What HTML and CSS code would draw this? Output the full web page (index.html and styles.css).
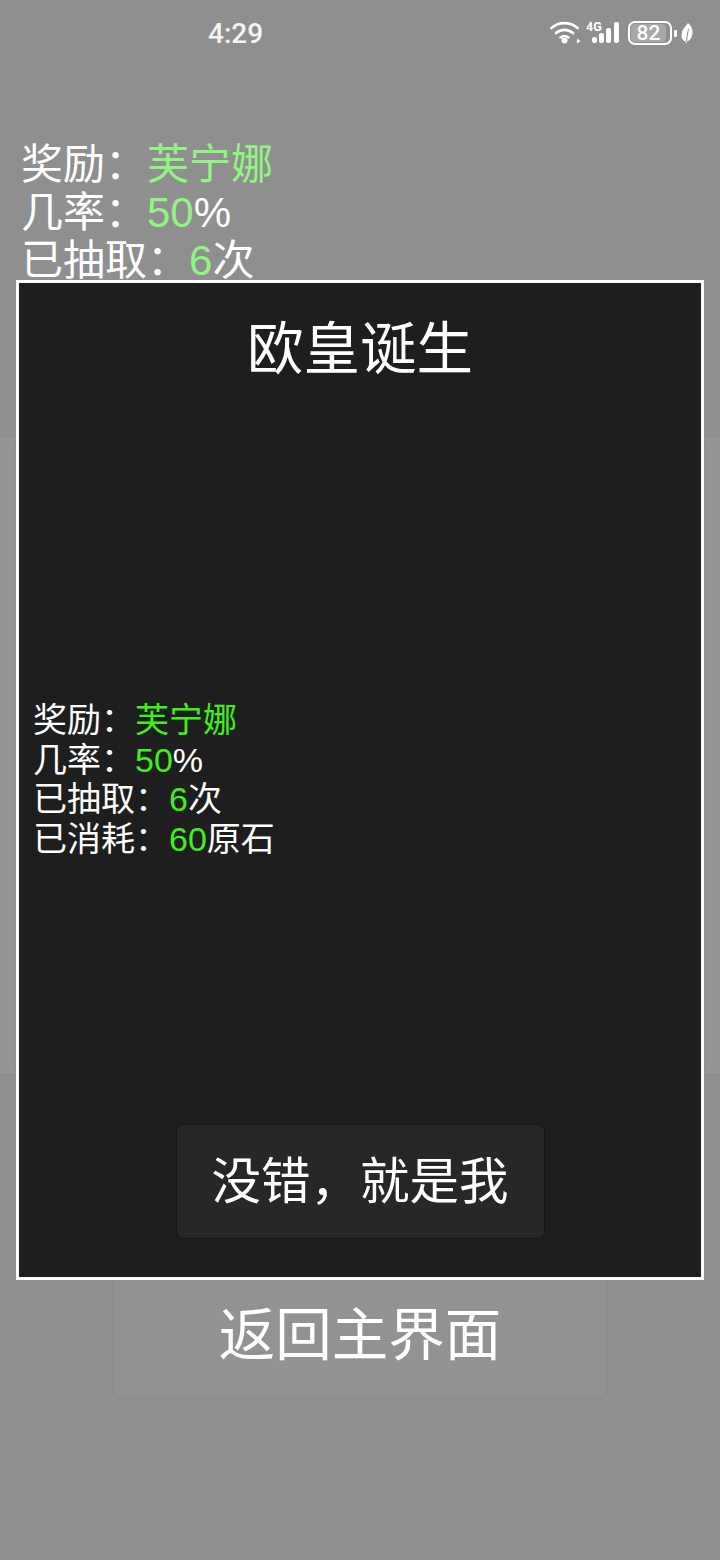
FILE: index.html
```html
<!DOCTYPE html>
<html lang="zh-CN">
<head>
    <meta charset="utf-8">
    <title>抽奖结果</title>
    <link rel="stylesheet" href="styles.css">
</head>
<body>
    <div class="screen">
        <div class="statusbar">
            <span class="statusbar__time">4:29</span>
            <div class="statusbar__icons">
                <svg class="wifi" width="31" height="26" viewBox="0 0 31 26">
                    <path d="M1.500 8a20 20 0 0 1 26 0" fill="none" stroke="#fff" stroke-width="2.800" stroke-linecap="round"/>
                    <path d="M6 13a13 13 0 0 1 17 0" fill="none" stroke="#fff" stroke-width="2.800" stroke-linecap="round"/>
                    <path d="M10.500 17.500a6.500 6.500 0 0 1 8 0" fill="none" stroke="#fff" stroke-width="2.500" stroke-linecap="round"/>
                    <circle cx="14.500" cy="20.500" r="3" fill="#fff"/>
                    <path d="M27 18.500l3.500 2.500-3.500 2.500z" fill="#fff"/>
                </svg>
                <div class="signal">
                    <span class="signal__label">4G</span>
                    <svg width="34" height="26" viewBox="0 0 34 26">
                        <rect x="6" y="17" width="5" height="6" rx="2" fill="#fff"/>
                        <rect x="13" y="13" width="5" height="10" rx="2" fill="#fff"/>
                        <rect x="20" y="8" width="5" height="15" rx="2" fill="#fff"/>
                        <rect x="28" y="2" width="5" height="21" rx="2" fill="#fff"/>
                    </svg>
                </div>
                <div class="battery">
                    <div class="battery__body"><span class="battery__level">82</span></div>
                    <span class="battery__cap"></span>
                </div>
                <svg class="leaf" width="12" height="20" viewBox="0 0 12 20">
                    <path d="M7 0C10.500 3 12 6.500 11.500 10.500 11 14.500 9 17.500 6 18.500L5.500 20 4.500 19.500 5 18.500C2 18 0 15.500 0.500 11.500 1 7 4 3.500 7 0z" fill="#fff"/>
                    <path d="M5.500 18.500C6 14 6.500 10 7.500 6" fill="none" stroke="#8e8e8e" stroke-width="1"/>
                </svg>
            </div>
        </div>

        <div class="summary">
            <div>奖励：<span class="summary__value">芙宁娜</span></div>
            <div>几率：<span class="summary__value">50</span>%</div>
            <div>已抽取：<span class="summary__value">6</span>次</div>
        </div>

        <div class="panel"><div class="panel__inner"></div></div>

        <div class="back-button">返回主界面</div>

        <div class="dialog">
            <div class="dialog__title">欧皇诞生</div>
            <div class="result">
                <div>奖励：<span class="result__value">芙宁娜</span></div>
                <div>几率：<span class="result__value">50</span>%</div>
                <div>已抽取：<span class="result__value">6</span>次</div>
                <div>已消耗：<span class="result__value">60</span>原石</div>
            </div>
            <div class="dialog__button">没错，就是我</div>
        </div>
    </div>
</body>
</html>
```

FILE: styles.css
```css
html,
body {
    margin: 0;
    padding: 0;
}
body {
    background: #8f8f8f;
    color: #fff;
    font-family: "Liberation Sans", "Noto Sans CJK SC", sans-serif;
}

.screen {
    height: 1560px;
    overflow: hidden;
    position: relative;
    width: 720px;
}

.statusbar {
    align-items: center;
    display: flex;
    height: 66px;
    justify-content: space-between;
    padding: 0 27px 0 208px;
}
.statusbar__time {
    color: #f4f4f4;
    font-family: Roboto, sans-serif;
    font-size: 28px;
    font-weight: 500;
}
.statusbar__icons {
    align-items: center;
    display: flex;
    gap: 7px;
}
.wifi {
    margin-right: -2px;
}
.signal {
    height: 26px;
    position: relative;
    width: 34px;
}
.signal__label {
    font-family: Roboto, sans-serif;
    font-size: 12.500px;
    font-weight: 700;
    left: 0;
    line-height: 12px;
    position: absolute;
    top: 1px;
}
.battery {
    align-items: center;
    display: flex;
    gap: 2px;
    margin-left: 1px;
}
.battery__body {
    border: 2px solid #fff;
    border-radius: 7px;
    box-sizing: border-box;
    display: flex;
    height: 24px;
    padding: 1px;
    width: 44px;
}
.battery__level {
    background: #a8a8a8;
    border-radius: 4px;
    font-family: Roboto, sans-serif;
    font-size: 21px;
    font-weight: 500;
    line-height: 18px;
    text-align: center;
    width: 35px;
}
.battery__cap {
    background: #fff;
    border-radius: 1px;
    height: 7px;
    width: 3px;
}
.leaf {
    margin-left: -3px;
}

.summary {
    font-size: 42px;
    line-height: 48px;
    margin-top: 75px;
    padding-left: 21px;
}
.summary__value {
    color: #92f482;
}

.panel {
    background: #949494;
    border-bottom: 1px solid #8b8b8b;
    box-sizing: border-box;
    height: 637px;
    margin-top: 153px;
}
.panel__inner {
    border: 1px solid #8c8c8c;
    border-radius: 6px;
    box-sizing: border-box;
    height: 100%;
    margin: 0 14px;
}

.back-button {
    background: #929292;
    border-radius: 6px;
    box-shadow: 0 0 0 1px #8b8b8b;
    font-size: 56.500px;
    height: 118px;
    line-height: 116px;
    margin: 203px 114px 0 114px;
    text-align: center;
}

/* dialog sits over the dimmed page */
.dialog {
    background: #1e1e1e;
    border: 3px solid #fff;
    box-sizing: border-box;
    display: flex;
    flex-direction: column;
    height: 1000px;
    left: 16px;
    padding: 0 14px;
    position: absolute;
    top: 280px;
    width: 688px;
}
.dialog__title {
    font-size: 56.500px;
    line-height: 70px;
    margin-top: 32px;
    text-align: center;
}
.result {
    font-size: 34px;
    line-height: 39.500px;
    margin-top: 316px;
}
.result__value {
    color: #3ff01a;
}
.dialog__button {
    align-self: center;
    background: #272727;
    border-radius: 6px;
    box-shadow: 0 0 0 1px #161616;
    font-size: 49.500px;
    height: 113px;
    line-height: 113px;
    margin-top: auto;
    margin-bottom: 39px;
    text-align: center;
    width: 367px;
}
```
